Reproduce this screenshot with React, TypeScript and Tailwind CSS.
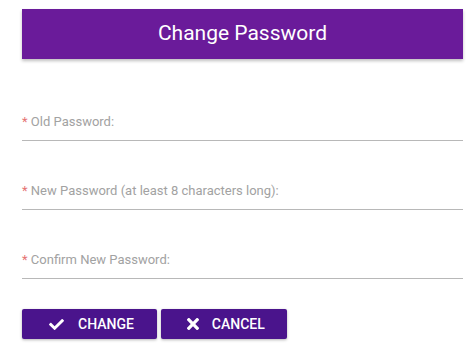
import { FaCheck, FaTimes } from "react-icons/fa";

function Field({ label }: { label: string }) {
  return (
    <div className="border-b border-[#b8b8b8] pb-[8px]">
      <label className="block text-[13px] leading-[20px] text-[#a2a2a2]">
        <span className="text-[#e57373]">*</span> {label}
      </label>
    </div>
  );
}

export default function App() {
  return (
    <div className="min-h-screen bg-white pl-[22px] pr-[11px] pt-[9px] font-['Roboto',sans-serif]">
      <div className="flex h-[50px] items-center justify-center bg-[#6a1b9a] shadow-[0_2px_3px_rgba(0,0,0,0.25)]">
        <h1 className="text-[21px] font-normal text-white">Change Password</h1>
      </div>

      <div className="mt-[53px] flex flex-col gap-[40px]">
        <Field label="Old Password:" />
        <Field label="New Password (at least 8 characters long):" />
        <Field label="Confirm New Password:" />
      </div>

      <div className="mt-[30px] flex gap-[4px]">
        <button className="flex h-[30px] items-center gap-[14px] rounded-[2px] bg-[#4a148c] pl-[27px] pr-[23px] text-[14px] font-medium text-white shadow-[0_1px_3px_rgba(0,0,0,0.3)]">
          <FaCheck className="h-[15px] w-[15px]" />
          CHANGE
        </button>
        <button className="flex h-[30px] items-center gap-[13px] rounded-[2px] bg-[#4a148c] pl-[26px] pr-[22px] text-[14px] font-medium text-white shadow-[0_1px_3px_rgba(0,0,0,0.3)]">
          <FaTimes className="h-[18px] w-[12px]" />
          CANCEL
        </button>
      </div>
    </div>
  );
}
